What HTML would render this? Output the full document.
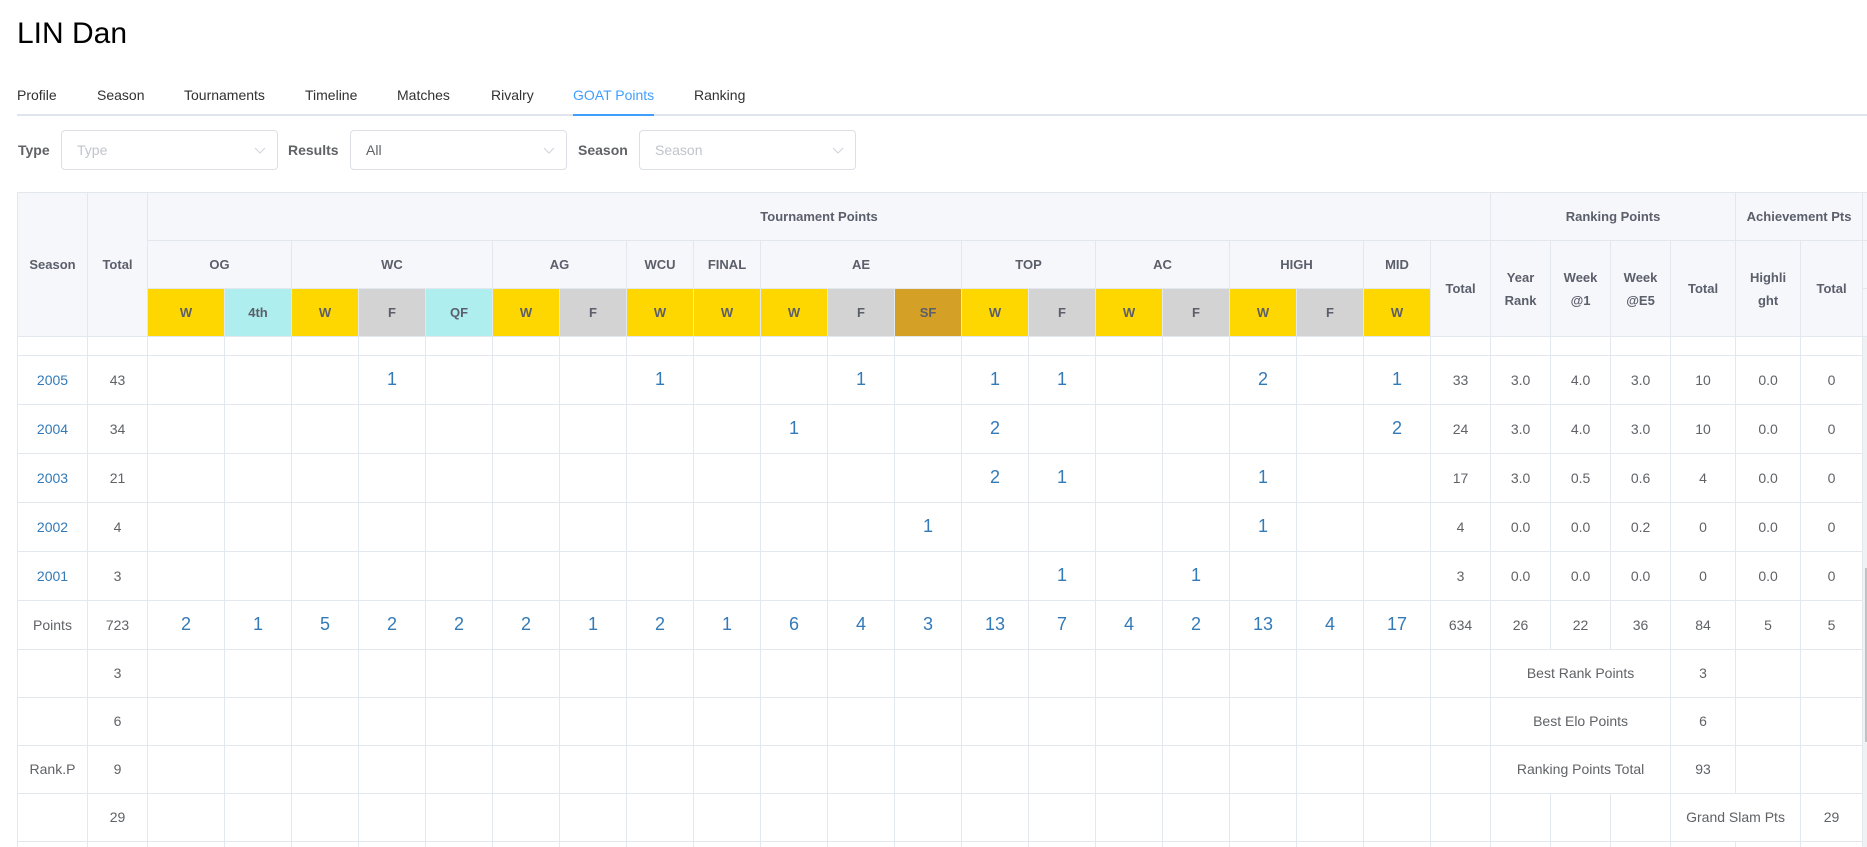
<!DOCTYPE html>
<html lang="en">
<head>
<meta charset="utf-8">
<title>LIN Dan</title>
<style>
*{box-sizing:border-box}
html,body{margin:0;padding:0;width:1867px;height:847px;overflow:hidden;background:#fff}
body{position:relative;font-family:"Liberation Sans",Arial,sans-serif;color:#606266}
h1{position:absolute;left:17px;top:16px;margin:0;font-size:30px;line-height:36px;font-weight:400;color:#000}
.tabline{position:absolute;left:17px;right:0;top:114px;height:2px;background:#dfe4ed}
.tabact{position:absolute;left:573px;width:81px;top:114px;height:2px;background:#409eff}
.tab{position:absolute;top:85px;font-size:14px;line-height:20px;color:#303133;white-space:nowrap}
.tab.on{color:#409eff}
.lab{position:absolute;top:140px;font-size:14px;line-height:20px;font-weight:700;color:#606266;white-space:nowrap}
.sel{position:absolute;top:130px;width:217px;height:40px;border:1px solid #dcdfe6;border-radius:4px;background:#fff;padding-left:15px;font-size:14px;line-height:38px;color:#606266}
.sel.ph{color:#c0c4cc}
.sel svg{position:absolute;right:11px;top:16px}
.wrap{position:absolute;left:17px;top:192px;width:1846px;height:655px;overflow:hidden;border-left:1px solid #e3e8ee;border-top:1px solid #e3e8ee}
table{table-layout:fixed;border-collapse:separate;border-spacing:0;width:1845px;font-size:14px;color:#606266}
td,th{padding:0;border-right:1px solid #e3e8ee;border-bottom:1px solid #e3e8ee;text-align:center;vertical-align:middle;overflow:hidden}
th{background:#f5f7fa;font-size:13px;font-weight:700;line-height:23px;color:#5b5e6b}
.w{background:#ffd700}.f{background:#d3d3d3}.q{background:#afeeee}.s{background:#d4a025}
tr.h1{height:48px}tr.h0{height:19px}tr.r{height:49px}tr.n{height:48px}tr.n td{padding-bottom:2px}
tr.e{height:5px}tr.e td{border-bottom:0;font-size:0;line-height:0}
a{color:#337ab7;text-decoration:none}
.b{font-size:18px;position:relative;top:-1px}
.sb1{position:absolute;left:1863px;top:193px;width:4px;height:143px;background:#f5f7fa}
.sbl{position:absolute;left:1863px;width:4px;height:1px;background:#e3e8ee}
.sb2{position:absolute;left:1863px;top:337px;width:4px;height:510px;background:#f1f1f1}
.th{position:absolute;left:1865px;top:568px;width:2px;height:174px;background:#c1c1c1}
.edge{position:absolute;left:1863px;top:192px;width:4px;height:1px;background:#e3e8ee}
</style>
</head>
<body>
<h1>LIN Dan</h1>
<div class="tabline"></div><div class="tabact"></div>
<div class="tab" style="left:17px">Profile</div>
<div class="tab" style="left:97px">Season</div>
<div class="tab" style="left:184px">Tournaments</div>
<div class="tab" style="left:305px">Timeline</div>
<div class="tab" style="left:397px">Matches</div>
<div class="tab" style="left:491px">Rivalry</div>
<div class="tab on" style="left:573px">GOAT Points</div>
<div class="tab" style="left:694px">Ranking</div>

<div class="lab" style="left:18px">Type</div>
<div class="sel ph" style="left:61px">Type<svg width="12" height="7" viewBox="0 0 12 7"><path d="M1 1l5 5 5-5" fill="none" stroke="#d0d3d9" stroke-width="1"/></svg></div>
<div class="lab" style="left:288px">Results</div>
<div class="sel" style="left:350px">All<svg width="12" height="7" viewBox="0 0 12 7"><path d="M1 1l5 5 5-5" fill="none" stroke="#d0d3d9" stroke-width="1"/></svg></div>
<div class="lab" style="left:578px">Season</div>
<div class="sel ph" style="left:639px">Season<svg width="12" height="7" viewBox="0 0 12 7"><path d="M1 1l5 5 5-5" fill="none" stroke="#d0d3d9" stroke-width="1"/></svg></div>

<div class="wrap">
<table>
<colgroup>
<col style="width:70px"><col style="width:60px"><col style="width:77px">
<col style="width:67px"><col style="width:67px"><col style="width:67px"><col style="width:67px"><col style="width:67px"><col style="width:67px"><col style="width:67px"><col style="width:67px"><col style="width:67px"><col style="width:67px"><col style="width:67px"><col style="width:67px"><col style="width:67px"><col style="width:67px"><col style="width:67px"><col style="width:67px"><col style="width:67px"><col style="width:67px">
<col style="width:60px"><col style="width:60px"><col style="width:60px"><col style="width:60px"><col style="width:65px"><col style="width:65px"><col style="width:62px">
</colgroup>
<tr class="h1">
<th rowspan="3">Season</th><th rowspan="3">Total</th>
<th colspan="20">Tournament Points</th>
<th colspan="4">Ranking Points</th>
<th colspan="2">Achievement Pts</th>
</tr>
<tr class="h1">
<th colspan="2">OG</th><th colspan="3">WC</th><th colspan="2">AG</th><th>WCU</th><th>FINAL</th><th colspan="3">AE</th><th colspan="2">TOP</th><th colspan="2">AC</th><th colspan="2">HIGH</th><th>MID</th>
<th rowspan="2">Total</th>
<th rowspan="2">Year<br>Rank</th><th rowspan="2">Week<br>@1</th><th rowspan="2">Week<br>@E5</th><th rowspan="2">Total</th>
<th rowspan="2">Highli<br>ght</th><th rowspan="2">Total</th>
</tr>
<tr class="h1">
<th class="w">W</th><th class="q">4th</th><th class="w">W</th><th class="f">F</th><th class="q">QF</th><th class="w">W</th><th class="f">F</th><th class="w">W</th><th class="w">W</th><th class="w">W</th><th class="f">F</th><th class="s">SF</th><th class="w">W</th><th class="f">F</th><th class="w">W</th><th class="f">F</th><th class="w">W</th><th class="f">F</th><th class="w">W</th>
</tr>
<tr class="h0"><td></td><td></td><td></td><td></td><td></td><td></td><td></td><td></td><td></td><td></td><td></td><td></td><td></td><td></td><td></td><td></td><td></td><td></td><td></td><td></td><td></td><td></td><td></td><td></td><td></td><td></td><td></td><td></td></tr>
<tr class="r"><td><a>2005</a></td><td>43</td><td></td><td></td><td></td><td><a class="b">1</a></td><td></td><td></td><td></td><td><a class="b">1</a></td><td></td><td></td><td><a class="b">1</a></td><td></td><td><a class="b">1</a></td><td><a class="b">1</a></td><td></td><td></td><td><a class="b">2</a></td><td></td><td><a class="b">1</a></td><td>33</td><td>3.0</td><td>4.0</td><td>3.0</td><td>10</td><td>0.0</td><td>0</td></tr>
<tr class="r"><td><a>2004</a></td><td>34</td><td></td><td></td><td></td><td></td><td></td><td></td><td></td><td></td><td></td><td><a class="b">1</a></td><td></td><td></td><td><a class="b">2</a></td><td></td><td></td><td></td><td></td><td></td><td><a class="b">2</a></td><td>24</td><td>3.0</td><td>4.0</td><td>3.0</td><td>10</td><td>0.0</td><td>0</td></tr>
<tr class="r"><td><a>2003</a></td><td>21</td><td></td><td></td><td></td><td></td><td></td><td></td><td></td><td></td><td></td><td></td><td></td><td></td><td><a class="b">2</a></td><td><a class="b">1</a></td><td></td><td></td><td><a class="b">1</a></td><td></td><td></td><td>17</td><td>3.0</td><td>0.5</td><td>0.6</td><td>4</td><td>0.0</td><td>0</td></tr>
<tr class="r"><td><a>2002</a></td><td>4</td><td></td><td></td><td></td><td></td><td></td><td></td><td></td><td></td><td></td><td></td><td></td><td><a class="b">1</a></td><td></td><td></td><td></td><td></td><td><a class="b">1</a></td><td></td><td></td><td>4</td><td>0.0</td><td>0.0</td><td>0.2</td><td>0</td><td>0.0</td><td>0</td></tr>
<tr class="r"><td><a>2001</a></td><td>3</td><td></td><td></td><td></td><td></td><td></td><td></td><td></td><td></td><td></td><td></td><td></td><td></td><td></td><td><a class="b">1</a></td><td></td><td><a class="b">1</a></td><td></td><td></td><td></td><td>3</td><td>0.0</td><td>0.0</td><td>0.0</td><td>0</td><td>0.0</td><td>0</td></tr>
<tr class="r"><td>Points</td><td>723</td><td><a class="b">2</a></td><td><a class="b">1</a></td><td><a class="b">5</a></td><td><a class="b">2</a></td><td><a class="b">2</a></td><td><a class="b">2</a></td><td><a class="b">1</a></td><td><a class="b">2</a></td><td><a class="b">1</a></td><td><a class="b">6</a></td><td><a class="b">4</a></td><td><a class="b">3</a></td><td><a class="b">13</a></td><td><a class="b">7</a></td><td><a class="b">4</a></td><td><a class="b">2</a></td><td><a class="b">13</a></td><td><a class="b">4</a></td><td><a class="b">17</a></td><td>634</td><td>26</td><td>22</td><td>36</td><td>84</td><td>5</td><td>5</td></tr>
<tr class="n"><td></td><td>3</td><td></td><td></td><td></td><td></td><td></td><td></td><td></td><td></td><td></td><td></td><td></td><td></td><td></td><td></td><td></td><td></td><td></td><td></td><td></td><td></td><td colspan="3">Best Rank Points</td><td>3</td><td></td><td></td></tr>
<tr class="n"><td></td><td>6</td><td></td><td></td><td></td><td></td><td></td><td></td><td></td><td></td><td></td><td></td><td></td><td></td><td></td><td></td><td></td><td></td><td></td><td></td><td></td><td></td><td colspan="3">Best Elo Points</td><td>6</td><td></td><td></td></tr>
<tr class="n"><td>Rank.P</td><td>9</td><td></td><td></td><td></td><td></td><td></td><td></td><td></td><td></td><td></td><td></td><td></td><td></td><td></td><td></td><td></td><td></td><td></td><td></td><td></td><td></td><td colspan="3">Ranking Points Total</td><td>93</td><td></td><td></td></tr>
<tr class="n"><td></td><td>29</td><td></td><td></td><td></td><td></td><td></td><td></td><td></td><td></td><td></td><td></td><td></td><td></td><td></td><td></td><td></td><td></td><td></td><td></td><td></td><td></td><td></td><td></td><td></td><td colspan="2">Grand Slam Pts</td><td>29</td></tr>
<tr class="e"><td></td><td></td><td></td><td></td><td></td><td></td><td></td><td></td><td></td><td></td><td></td><td></td><td></td><td></td><td></td><td></td><td></td><td></td><td></td><td></td><td></td><td></td><td></td><td></td><td></td><td></td><td></td><td></td></tr>
</table>
</div>
<div class="edge"></div>
<div class="sb1"></div>
<div class="sbl" style="top:240px"></div>
<div class="sbl" style="top:288px"></div>
<div class="sbl" style="top:336px"></div>
<div class="sb2"></div>
<div class="th"></div>
</body>
</html>
